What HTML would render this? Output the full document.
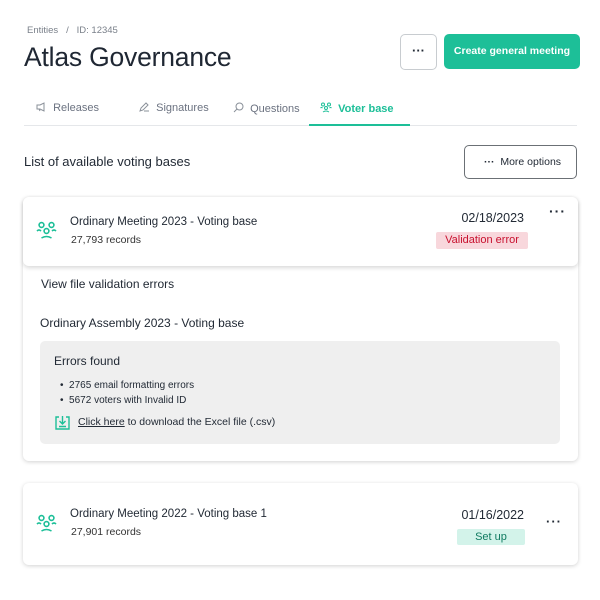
<!DOCTYPE html>
<html><head><meta charset="utf-8"><style>
*{margin:0;padding:0;box-sizing:border-box}
body{width:600px;height:600px;background:#fff;font-family:"Liberation Sans",Arial,sans-serif;color:#222a35;position:relative;overflow:hidden}
.a{position:absolute;white-space:nowrap}
.card{position:absolute;background:#fff;border-radius:6px;box-shadow:0 1px 4px rgba(0,0,0,.18)}
.dots{letter-spacing:1px;font-weight:bold}
</style></head><body>
<div class="a" style="left:27px;top:25px;font-size:9.5px;color:#7a808a">Entities &nbsp;&nbsp;/&nbsp;&nbsp; ID: 12345</div>
<div class="a" style="left:24px;top:42px;font-size:26.5px;color:#1f2733;letter-spacing:-0.2px">Atlas Governance</div>
<div class="a" style="left:400px;top:34px;width:37px;height:36px;border:1px solid #c8ccd0;border-radius:5px;text-align:center;line-height:32px;font-size:13px;font-weight:bold">···</div>
<div class="a" style="left:444px;top:34px;width:136px;height:35px;background:#1dbf98;border-radius:5px;color:#fff;text-align:center;line-height:35px;font-size:10.5px;font-weight:bold">Create general meeting</div>

<div class="a" style="left:36px;top:102px;font-size:11px;color:#6b7280">
<svg width="11" height="10" viewBox="0 0 11 10" style="vertical-align:-1px"><path d="M1 3h3l4-2v8l-4-2H1zM3 7l1 2" fill="none" stroke="#8a9099" stroke-width="1"/></svg>&nbsp; Releases</div>
<div class="a" style="left:139px;top:102px;font-size:11px;color:#6b7280">
<svg width="11" height="10" viewBox="0 0 11 10" style="vertical-align:-1px"><path d="M1 9l1-3 5-5 2 2-5 5zM5 9h5" fill="none" stroke="#8a9099" stroke-width="1"/></svg>&nbsp; Signatures</div>
<div class="a" style="left:233px;top:102px;font-size:11px;color:#6b7280">
<svg width="11" height="11" viewBox="0 0 11 11" style="vertical-align:-1px"><circle cx="6.5" cy="4.5" r="3.5" fill="none" stroke="#8a9099"/><path d="M4 7L1 10" stroke="#8a9099"/></svg>&nbsp; Questions</div>
<div class="a" style="left:320px;top:102px;font-size:11px;color:#1dbf98;font-weight:bold">
<svg width="12" height="11" viewBox="0 0 12 11" style="vertical-align:-1px" fill="none" stroke="#1dbf98"><circle cx="3" cy="2.5" r="1.5"/><circle cx="9" cy="2.5" r="1.5"/><circle cx="6" cy="6" r="1.5"/><path d="M3 10q3-2 6 0M0.5 6q1-1 2 0M9.5 6q1-1 2 0"/></svg>&nbsp; Voter base</div>
<div class="a" style="left:24px;top:125px;width:553px;height:1px;background:#e5e7ea"></div>
<div class="a" style="left:309px;top:124px;width:101px;height:2px;background:#1dbf98"></div>

<div class="a" style="left:24px;top:154px;font-size:13px">List of available voting bases</div>
<div class="a" style="left:464px;top:145px;width:113px;height:34px;border:1px solid #6b7075;border-radius:5px;font-size:10.5px;line-height:32px;padding-left:19px"><b>···</b>&nbsp; More options</div>

<div class="card" style="left:23px;top:197px;width:555px;height:264px"></div>
<div class="card" style="left:23px;top:197px;width:555px;height:69px;box-shadow:0 2px 4px rgba(0,0,0,.15)"></div>
<svg class="a" style="left:36px;top:220px" width="22" height="20" viewBox="0 0 22 20" fill="none" stroke="#1dbf98" stroke-width="1.6"><circle cx="5.5" cy="5" r="2.4"/><circle cx="15.5" cy="5" r="2.4"/><circle cx="10.5" cy="11" r="2.4"/><path d="M5.5 18q5-3 10 0M1 11q2-2 4 0M16 11q2-2 4 0"/></svg>
<div class="a" style="left:70px;top:216px;font-size:11.5px">Ordinary Meeting 2023 - Voting base</div>
<div class="a" style="left:71px;top:234px;font-size:10.5px;color:#333">27,793 records</div>
<div class="a" style="left:440px;top:211px;width:84px;text-align:right;font-size:12.5px">02/18/2023</div>
<div class="a" style="left:436px;top:232px;width:92px;height:17px;background:#f8d7dc;border-radius:2px;color:#c8102e;font-size:11px;text-align:center;line-height:17px">Validation error</div>
<div class="a dots" style="left:549px;top:203px;font-size:14px">···</div>
<div class="a" style="left:41px;top:277px;font-size:12px">View file validation errors</div>
<div class="a" style="left:40px;top:316px;font-size:12px">Ordinary Assembly 2023 - Voting base</div>
<div class="a" style="left:40px;top:341px;width:520px;height:103px;background:#efefef;border-radius:5px"></div>
<div class="a" style="left:54px;top:354px;font-size:12px">Errors found</div>
<div class="a" style="left:60px;top:378px;font-size:10px;line-height:15px">•&nbsp; 2765 email formatting errors<br>•&nbsp; 5672 voters with Invalid ID</div>
<svg class="a" style="left:55px;top:415px" width="15" height="15" viewBox="0 0 15 15" fill="none" stroke="#1dbf98" stroke-width="1.4"><path d="M4 2H1v12h13V2h-3M7.5 1v8M4.5 6l3 3 3-3M4 11.5h7"/></svg>
<div class="a" style="left:78px;top:416px;font-size:10.5px"><span style="text-decoration:underline">Click here</span> to download the Excel file (.csv)</div>

<div class="card" style="left:23px;top:483px;width:555px;height:82px"></div>
<svg class="a" style="left:36px;top:513px" width="22" height="20" viewBox="0 0 22 20" fill="none" stroke="#1dbf98" stroke-width="1.6"><circle cx="5.5" cy="5" r="2.4"/><circle cx="15.5" cy="5" r="2.4"/><circle cx="10.5" cy="11" r="2.4"/><path d="M5.5 18q5-3 10 0M1 11q2-2 4 0M16 11q2-2 4 0"/></svg>
<div class="a" style="left:70px;top:508px;font-size:11.5px">Ordinary Meeting 2022 - Voting base 1</div>
<div class="a" style="left:71px;top:526px;font-size:10.5px;color:#333">27,901 records</div>
<div class="a" style="left:440px;top:508px;width:84px;text-align:right;font-size:12.5px">01/16/2022</div>
<div class="a" style="left:457px;top:529px;width:68px;height:16px;background:#d3f3ea;border-radius:2px;color:#0f7a60;font-size:11px;text-align:center;line-height:16px">Set up</div>
<div class="a dots" style="left:546px;top:514px;font-size:13px">···</div>
</body></html>
